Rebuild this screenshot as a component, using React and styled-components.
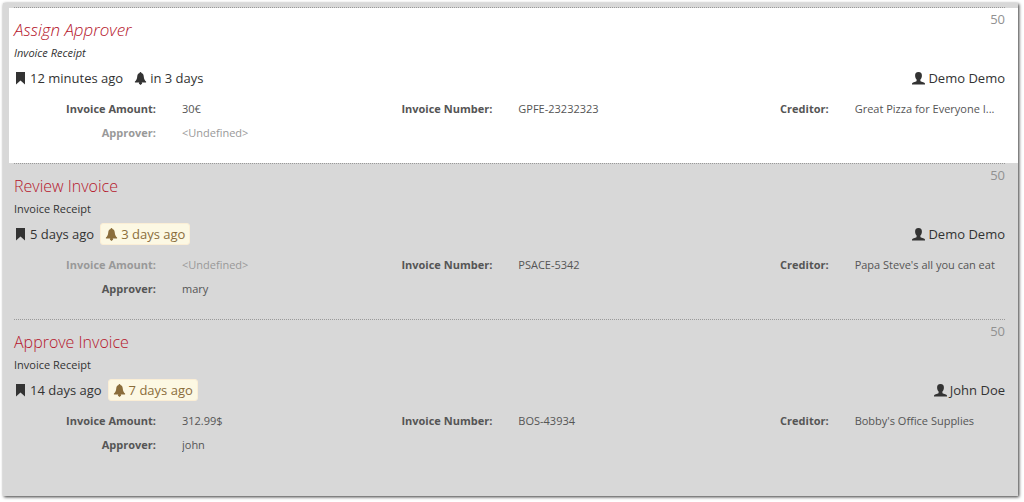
import styled, { createGlobalStyle, css } from 'styled-components'

const GlobalStyle = createGlobalStyle`
	* {
		box-sizing: border-box;
	}
	body {
		margin: 0;
		background-color: #fff;
		color: #333;
		font-family: 'Open Sans', sans-serif;
		font-size: 13px;
		line-height: 20px;
	}
`

const tasks = [
	{
		id: 1,
		name: 'Assign Approver',
		process: 'Invoice Receipt',
		created: '12 minutes ago',
		due: 'in 3 days',
		overdue: false,
		selected: true,
		assignee: 'Demo Demo',
		priority: 50,
		variables: [
			{ label: 'Invoice Amount', value: '30€' },
			{ label: 'Invoice Number', value: 'GPFE-23232323' },
			{ label: 'Creditor', value: 'Great Pizza for Everyone I...' },
			{ label: 'Approver' },
		],
	},
	{
		id: 2,
		name: 'Review Invoice',
		process: 'Invoice Receipt',
		created: '5 days ago',
		due: '3 days ago',
		overdue: true,
		assignee: 'Demo Demo',
		priority: 50,
		variables: [
			{ label: 'Invoice Amount' },
			{ label: 'Invoice Number', value: 'PSACE-5342' },
			{ label: 'Creditor', value: "Papa Steve's all you can eat" },
			{ label: 'Approver', value: 'mary' },
		],
	},
	{
		id: 3,
		name: 'Approve Invoice',
		process: 'Invoice Receipt',
		created: '14 days ago',
		due: '7 days ago',
		overdue: true,
		assignee: 'John Doe',
		priority: 50,
		variables: [
			{ label: 'Invoice Amount', value: '312.99$' },
			{ label: 'Invoice Number', value: 'BOS-43934' },
			{ label: 'Creditor', value: "Bobby's Office Supplies" },
			{ label: 'Approver', value: 'john' },
		],
	},
]

const Panel = styled.main`
	margin: 3px 6px 6px 3px;
	padding: 4px 0 21px 6px;
	background-color: #d8d8d8;
	box-shadow: 1px 1px 3px rgba(0, 0, 0, 0.8);
`

const TaskList = styled.ul`
	margin: 0;
	padding: 0;
	list-style: none;
`

const Divider = styled.div`
	margin: 0 13px 0 5px;
	border-top: 1px dotted #999;
`

const TaskBody = styled.article`
	padding: 0 0 18px;
	${(props) =>
		props.$selected &&
		css`
			background-color: #fff;
			font-style: italic;
		`}
`

const TaskHeader = styled.header`
	display: flex;
	justify-content: space-between;
	align-items: flex-start;
	padding: 0 13px 0 5px;
`

const TaskName = styled.h4`
	margin: 11px 0 0;
	font-size: ${(props) => (props.$selected ? '17px' : '16px')};
	font-weight: 300;
	line-height: 22px;
	color: #b5152b;
`

const Priority = styled.span`
	font-style: normal;
	line-height: 22px;
	color: #919191;
`

const ProcessName = styled.div`
	padding: 0 5px;
	font-size: 11px;
	line-height: 24px;
`

const Meta = styled.div`
	display: flex;
	align-items: center;
	height: 24px;
	margin-top: 1px;
	padding: 0 13px 0 5px;
	font-style: normal;
`

const MetaItem = styled.span`
	display: flex;
	align-items: center;
	gap: 3px;
	white-space: nowrap;
`

const DueDate = styled(MetaItem)`
	margin-left: 6px;
	padding: 0 4px;
	border: 1px solid transparent;
	border-radius: 3px;
	${(props) =>
		props.$overdue &&
		css`
			background-color: #fcf8e3;
			border-color: #fbeed5;
			color: #8a6d3b;
		`}
`

const Assignee = styled(MetaItem)`
	margin-left: auto;
`

const Icon = styled.svg`
	flex: none;
	width: 13px;
	height: 13px;
	fill: currentColor;
`

const Variables = styled.dl`
	display: grid;
	grid-template-columns: repeat(3, 1fr);
	margin: 7px 0 0;
	font-size: 11px;
	font-style: normal;
	line-height: 24px;
`

const Variable = styled.div`
	display: grid;
	grid-template-columns: 44% 1fr;
	column-gap: 25px;
	min-width: 0;
	color: ${(props) => (props.$empty ? '#999' : '#555')};

	dt {
		padding-right: 1px;
		font-weight: 700;
		text-align: right;
	}
	dd {
		min-width: 0;
		margin: 0 16px 0 0;
		overflow: hidden;
		text-overflow: ellipsis;
		white-space: nowrap;
	}
`

function BookmarkIcon() {
	return (
		<Icon viewBox='0 0 13 13' aria-hidden='true'>
			<path d='M2 0h9v12.500L6.500 8.500 2 12.500z' />
		</Icon>
	)
}

function BellIcon() {
	return (
		<Icon viewBox='0 0 13 13' aria-hidden='true'>
			<path d='M6.500 0c.6 0 .9.400.9 1C9 1.500 9.700 2.900 9.800 4.700c.1 2.200 1 3.700 2.300 4.800v1H7.700l.5 1-1.700 1.400-1.700-1.400.5-1H.9v-1C2.200 8.400 3.100 6.900 3.200 4.700 3.300 2.900 4 1.500 5.600 1c0-.6.3-1 .9-1z' />
		</Icon>
	)
}

function UserIcon() {
	return (
		<Icon viewBox='0 0 13 13' aria-hidden='true'>
			<path d='M6.500 0C9 0 9.900 1.400 9.900 3.400c0 1.700-.5 3.200-1.500 4.100v1.200c0 .4.200.6.600.8l2.900 1c.7.3 1.100.7 1.100 1.300v.7H0v-.7c0-.6.4-1 1.100-1.300l2.900-1c.4-.2.600-.4.600-.8V7.500C3.600 6.600 3.100 5.100 3.100 3.400 3.100 1.400 4 0 6.500 0z' />
		</Icon>
	)
}

function Task({ task }) {
	return (
		<li>
			<Divider />
			<TaskBody $selected={task.selected}>
				<TaskHeader>
					<TaskName $selected={task.selected}>{task.name}</TaskName>
					<Priority>{task.priority}</Priority>
				</TaskHeader>
				<ProcessName>{task.process}</ProcessName>
				<Meta>
					<MetaItem>
						<BookmarkIcon />
						{task.created}
					</MetaItem>
					<DueDate $overdue={task.overdue}>
						<BellIcon />
						{task.due}
					</DueDate>
					<Assignee>
						<UserIcon />
						{task.assignee}
					</Assignee>
				</Meta>
				<Variables>
					{task.variables.map(({ label, value }) => (
						<Variable key={label} $empty={!value}>
							<dt>{label}:</dt>
							<dd>{value || '<Undefined>'}</dd>
						</Variable>
					))}
				</Variables>
			</TaskBody>
		</li>
	)
}

export default function App() {
	return (
		<>
			<GlobalStyle />
			<Panel>
				<TaskList>
					{tasks.map((task) => (
						<Task key={task.id} task={task} />
					))}
				</TaskList>
			</Panel>
		</>
	)
}
